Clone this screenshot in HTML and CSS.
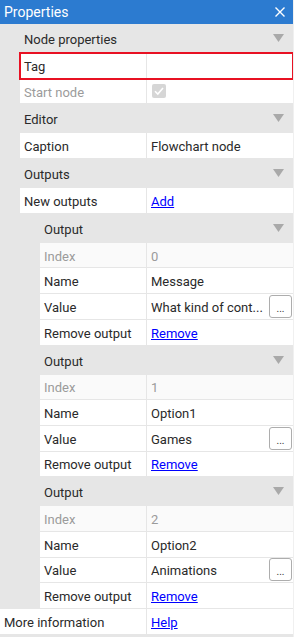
FILE: index.html
```html
<!DOCTYPE html>
<html lang="en">
<head>
  <meta charset="UTF-8">
  <meta name="viewport" content="width=device-width, initial-scale=1.0">
  <title>Properties</title>
  <link rel="stylesheet" href="styles.css">
</head>
<body>
<div class="panel">
  <div class="titlebar">
    <span class="title">Properties</span>
    <svg class="close" width="10" height="10" viewBox="0 0 10 10">
      <path d="M0.5 0.5 L9.5 9.5 M9.5 0.5 L0.5 9.5" stroke="#fff" stroke-width="1.4"/>
    </svg>
  </div>

  <div class="group">
    <div class="group-head">
      <span>Node properties</span>
      <svg class="arrow" width="11" height="8" viewBox="0 0 11 8"><polygon points="0,0 11,0 5.5,8"/></svg>
    </div>
    <div class="row selected">
      <div class="label">Tag</div>
      <div class="value"></div>
    </div>
    <div class="row disabled">
      <div class="label">Start node</div>
      <div class="value">
        <span class="check">
          <svg width="14" height="14" viewBox="0 0 14 14"><path d="M3 7.2 L5.8 10 L11 4" fill="none" stroke="#fff" stroke-width="1.6"/></svg>
        </span>
      </div>
    </div>
  </div>

  <div class="group">
    <div class="group-head">
      <span>Editor</span>
      <svg class="arrow" width="11" height="8" viewBox="0 0 11 8"><polygon points="0,0 11,0 5.5,8"/></svg>
    </div>
    <div class="row">
      <div class="label">Caption</div>
      <div class="value">Flowchart node</div>
    </div>
  </div>

  <div class="group">
    <div class="group-head">
      <span>Outputs</span>
      <svg class="arrow" width="11" height="8" viewBox="0 0 11 8"><polygon points="0,0 11,0 5.5,8"/></svg>
    </div>
    <div class="row">
      <div class="label">New outputs</div>
      <div class="value"><a href="#">Add</a></div>
    </div>

    <div class="group">
      <div class="group-head">
        <span>Output</span>
        <svg class="arrow" width="11" height="8" viewBox="0 0 11 8"><polygon points="0,0 11,0 5.5,8"/></svg>
      </div>
      <div class="row disabled readonly">
        <div class="label">Index</div>
        <div class="value">0</div>
      </div>
      <div class="row">
        <div class="label">Name</div>
        <div class="value">Message</div>
      </div>
      <div class="row">
        <div class="label">Value</div>
        <div class="value">
          <span class="text">What kind of cont...</span>
          <span class="dots">...</span>
        </div>
      </div>
      <div class="row">
        <div class="label">Remove output</div>
        <div class="value"><a href="#">Remove</a></div>
      </div>
    </div>

    <div class="group">
      <div class="group-head">
        <span>Output</span>
        <svg class="arrow" width="11" height="8" viewBox="0 0 11 8"><polygon points="0,0 11,0 5.5,8"/></svg>
      </div>
      <div class="row disabled readonly">
        <div class="label">Index</div>
        <div class="value">1</div>
      </div>
      <div class="row">
        <div class="label">Name</div>
        <div class="value">Option1</div>
      </div>
      <div class="row">
        <div class="label">Value</div>
        <div class="value">
          <span class="text">Games</span>
          <span class="dots">...</span>
        </div>
      </div>
      <div class="row">
        <div class="label">Remove output</div>
        <div class="value"><a href="#">Remove</a></div>
      </div>
    </div>

    <div class="group">
      <div class="group-head">
        <span>Output</span>
        <svg class="arrow" width="11" height="8" viewBox="0 0 11 8"><polygon points="0,0 11,0 5.5,8"/></svg>
      </div>
      <div class="row disabled readonly">
        <div class="label">Index</div>
        <div class="value">2</div>
      </div>
      <div class="row">
        <div class="label">Name</div>
        <div class="value">Option2</div>
      </div>
      <div class="row">
        <div class="label">Value</div>
        <div class="value">
          <span class="text">Animations</span>
          <span class="dots">...</span>
        </div>
      </div>
      <div class="row">
        <div class="label">Remove output</div>
        <div class="value"><a href="#">Remove</a></div>
      </div>
    </div>
  </div>

  <div class="row">
    <div class="label">More information</div>
    <div class="value"><a href="#">Help</a></div>
  </div>
</div>
</body>
</html>
```

FILE: styles.css
```css
body {
  margin: 0;
  padding: 0;
  background-color: #f0f0f0;
  font-family: "Segoe UI", Roboto, sans-serif;
  font-size: 13px;
  color: #2a2a2a;
}

.panel {
  width: 293px;
  height: 637px;
  background-color: #e6e6e6;
  overflow: hidden;
}

.titlebar {
  height: 24px;
  background-color: #2c7bd0;
  color: white;
  display: flex;
  align-items: center;
  justify-content: space-between;
  padding: 0 8px 0 4px;
  font-size: 14px;
}

.group {
  margin-left: 20px;
}

.group-head {
  height: 29px;
  box-sizing: border-box;
  padding: 2px 0 0 4px;
  display: flex;
  align-items: center;
  justify-content: space-between;
}

.group-head .arrow {
  align-self: flex-start;
  margin-top: 8px;
  margin-right: 9px;
  fill: #a9a9a9;
}

.row {
  height: 24.7px;
  display: flex;
  background-color: white;
  border-bottom: 1px solid #e6e6e6;
}

.row .label {
  width: 147px;
  flex: none;
  box-sizing: border-box;
  padding: 2px 0 0 4px;
  border-right: 1px solid #e6e6e6;
  display: flex;
  align-items: center;
  white-space: nowrap;
}

.group > .row .label {
  width: 127px;
}

.group .group > .row .label {
  width: 107px;
}

.row .value {
  flex: 1;
  min-width: 0;
  box-sizing: border-box;
  padding: 2px 0 0 4px;
  display: flex;
  align-items: center;
}

.row.selected {
  outline: 2px solid #e81123;
  outline-offset: -1px;
  position: relative;
}

.row.disabled .label,
.row.disabled .value {
  color: #9b9b9b;
}

.row.readonly {
  background-color: #fafafa;
}

.value a {
  color: #0000ff;
  text-decoration: underline;
}

.value .text {
  flex: 1;
  min-width: 0;
  overflow: hidden;
  white-space: nowrap;
}

.value .dots {
  flex: none;
  width: 23px;
  height: 23px;
  box-sizing: border-box;
  margin: -2px 1px 0 4px;
  border: 1px solid #adadad;
  border-radius: 3px;
  background-color: white;
  font-size: 10px;
  line-height: 26px;
  text-align: center;
  color: #333;
}

.check {
  width: 14px;
  height: 14px;
  margin: -2px 0 0 1px;
  border-radius: 2px;
  background-color: #d6d6d6;
  display: flex;
}
```
